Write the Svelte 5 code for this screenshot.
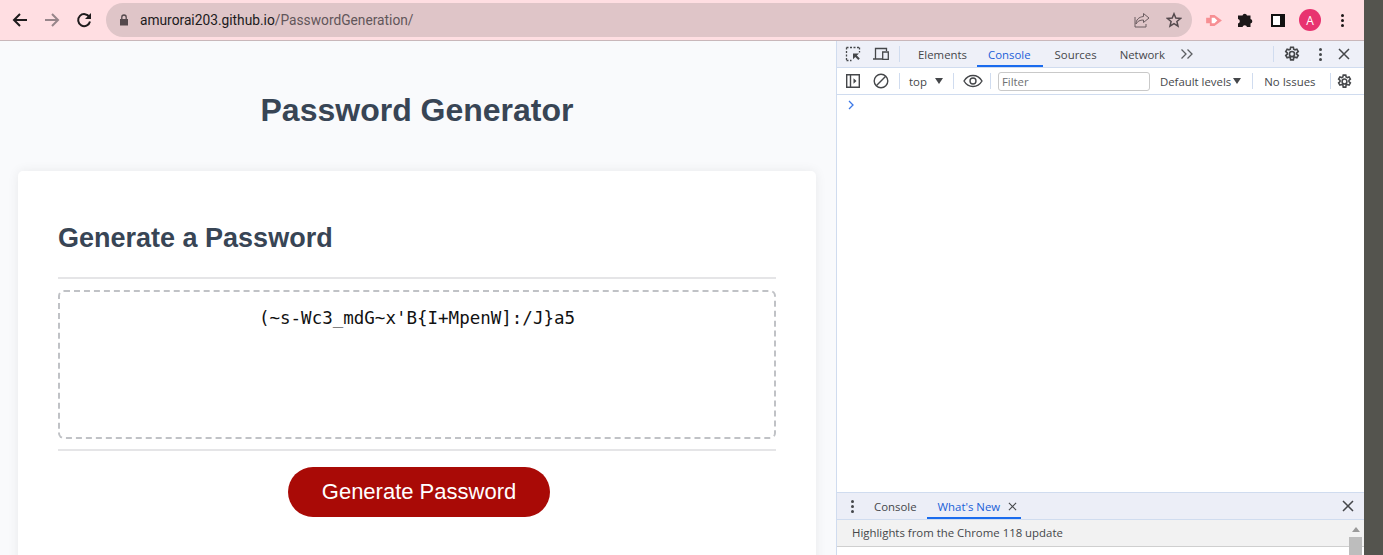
<script lang="ts">
  const password = "(~s-Wc3_mdG~x'B{I+MpenW]:/J}a5";
  const gear = "M12 8.6a3.4 3.4 0 1 0 0 6.8 3.4 3.4 0 0 0 0-6.8zM10.2 3h3.6l.5 2.6 1.7.9 2.5-.9 1.8 3.1-2 1.7v1.9l2 1.7-1.8 3.1-2.5-.9-1.7.9-.5 2.8h-3.6l-.5-2.8-1.7-.9-2.5.9-1.8-3.1 2-1.7v-1.9l-2-1.7 1.8-3.1 2.5.9 1.7-.9z";
</script>

<div class="window">
  <div class="browser">
    <header class="chrome-bar">
      <svg class="nav first" viewBox="0 0 16 16" width="16" height="16"><path d="M15 8H2M8 2L2 8l6 6" fill="none" stroke="#1f1b1d" stroke-width="2" /></svg>
      <svg class="nav" viewBox="0 0 16 16" width="16" height="16"><path d="M1 8h13M8 2l6 6-6 6" fill="none" stroke="#97858a" stroke-width="2" /></svg>
      <svg class="nav" viewBox="0 0 16 16" width="16" height="16"><path d="M13.4 5.2A6 6 0 1 0 14 9.5" fill="none" stroke="#1f1b1d" stroke-width="2" /><path d="M15 1v6H9z" fill="#1f1b1d" /></svg>
      <div class="omnibox">
        <svg viewBox="0 0 10 12" width="10" height="12"><path d="M1 5h8v6.500H1z" fill="#54494d" /><path d="M2.800 5V3.200a2.200 2.200 0 0 1 4.400 0V5" fill="none" stroke="#54494d" stroke-width="1.300" /></svg>
        <span class="url">amurorai203.github.io<span class="path">/PasswordGeneration/</span></span>
        <svg class="share" viewBox="0 0 16 16" width="16" height="16"><path d="M9.500 1.500 15 6l-5.500 4.500V8C6 8 3.500 9 2 12c0-4 2.500-7 7.500-7.500z" fill="none" stroke="#6a5c60" stroke-width="1" /><path d="M1 5v10h11v-3" fill="none" stroke="#6a5c60" stroke-width="1" /></svg>
        <svg class="star" viewBox="0 0 16 16" width="16" height="16"><path d="M8 1.800l1.800 4.300 4.700.4-3.600 3 1.100 4.600L8 11.700l-4 2.400 1.100-4.600-3.600-3 4.700-.4z" fill="none" stroke="#54494d" stroke-width="1.500" /></svg>
      </div>
      <svg class="ext" viewBox="0 0 18 14" width="17" height="13"><path d="M0 4h4V1h5l8 6-8 6H4v-3H0z" fill="#f78f93" /><path d="M6 4h3l3 3-3 3H6z" fill="#fff" /></svg>
      <svg class="puzzle" viewBox="0 0 16 16" width="16" height="16"><path d="M0 3.500h4.500a2.300 2.300 0 0 1 4.500 0h3.500V7a2.300 2.300 0 0 1 0 4.500V15H9a2.300 2.300 0 0 0-4.500 0H0v-3.500a2.300 2.300 0 0 0 0-4.500z" fill="#1c1718" /></svg>
      <div class="sidepanel"></div>
      <div class="avatar">A</div>
      <div class="kebab dark"><i></i><i></i><i></i></div>
    </header>

    <div class="split">
      <main class="page">
        <h1>Password Generator</h1>
        <section class="card">
          <h2>Generate a Password</h2>
          <div class="card-body">
            <div class="output">{password}</div>
          </div>
          <div class="card-footer">
            <button>Generate Password</button>
          </div>
        </section>
      </main>

      <aside class="devtools">
        <div class="dt-tabs">
          <svg class="dt-icon inspect" viewBox="0 0 16 16" width="16" height="16"><path d="M1.500 1.500h13M1.500 1.500v13M1.500 14.500h5M14.500 1.500v5" fill="none" stroke="#45474a" stroke-width="1.300" stroke-dasharray="2 1.500" /><path d="M8 7.500h6l-2.200 2 3 3-1.500 1.500-3-3-2.300 2.200z" fill="#45474a" /></svg>
          <svg class="dt-icon device" viewBox="0 0 18 16" width="18" height="16"><path d="M1 13h9M3.500 13V2.500h11V5" fill="none" stroke="#45474a" stroke-width="1.300" /><path d="M10.700 6h5.600v7.400h-5.600z" fill="none" stroke="#45474a" stroke-width="1.300" /></svg>
          <span class="sep tab-sep"></span>
          <span class="tab elements">Elements</span>
          <span class="tab active console-tab">Console</span>
          <span class="tab sources">Sources</span>
          <span class="tab">Network</span>
          <svg class="more" viewBox="0 0 14 12" width="14" height="12"><path d="M1.500 1.500 6 6l-4.500 4.500M7.500 1.500 12 6l-4.500 4.500" fill="none" stroke="#5c5f63" stroke-width="1.300" /></svg>
          <span class="spacer"></span>
          <span class="sep"></span>
          <svg class="gear-top" viewBox="0 0 24 24" width="18" height="18"><path d={gear} fill="none" stroke="#45474a" stroke-width="2.200" /></svg>
          <div class="kebab"><i></i><i></i><i></i></div>
          <svg class="close" viewBox="0 0 12 12" width="12" height="12"><path d="M1 1l10 10M11 1 1 11" stroke="#45474a" stroke-width="1.500" /></svg>
        </div>

        <div class="dt-toolbar">
          <svg class="panel-icon" viewBox="0 0 14 14" width="14" height="14"><path d="M.7.7h12.600v12.600H.7zM4.500 1v12" fill="none" stroke="#45474a" stroke-width="1.400" /><path d="M7.500 4.200l3 2.800-3 2.800z" fill="#45474a" /></svg>
          <svg class="clear" viewBox="0 0 16 16" width="16" height="16"><circle cx="8" cy="8" r="6.800" fill="none" stroke="#45474a" stroke-width="1.400" /><path d="M3.300 12.700l9.400-9.400" stroke="#45474a" stroke-width="1.400" /></svg>
          <span class="sep"></span>
          <span class="context">top</span>
          <span class="caret ctx"></span>
          <span class="sep"></span>
          <svg class="eye" viewBox="0 0 20 14" width="20" height="14"><path d="M1 7c2.200-3.700 5.200-5.500 9-5.500s6.800 1.800 9 5.500c-2.200 3.700-5.200 5.500-9 5.500S3.200 10.700 1 7z" fill="none" stroke="#45474a" stroke-width="1.400" /><circle cx="10" cy="7" r="3" fill="none" stroke="#45474a" stroke-width="1.400" /></svg>
          <span class="sep"></span>
          <div class="filter">Filter</div>
          <span class="levels">Default levels</span>
          <span class="caret"></span>
          <span class="sep levels-sep"></span>
          <span class="issues">No Issues</span>
          <span class="sep"></span>
          <svg class="gear-bottom" viewBox="0 0 24 24" width="17" height="17"><path d={gear} fill="none" stroke="#45474a" stroke-width="2.200" /></svg>
        </div>

        <div class="console">
          <svg viewBox="0 0 6 10" width="6" height="10"><path d="M1 1l4 4-4 4" fill="none" stroke="#3b78e7" stroke-width="1.300" /></svg>
        </div>

        <div class="drawer-tabs">
          <div class="kebab"><i></i><i></i><i></i></div>
          <span class="tab drawer-console">Console</span>
          <span class="tab active whats-new">What's New
            <svg viewBox="0 0 10 10" width="9" height="9"><path d="M1 1l8 8M9 1 1 9" stroke="#45474a" stroke-width="1.200" /></svg>
          </span>
          <span class="spacer"></span>
          <svg class="close" viewBox="0 0 12 12" width="12" height="12"><path d="M1 1l10 10M11 1 1 11" stroke="#45474a" stroke-width="1.500" /></svg>
        </div>
        <div class="drawer-body">
          <div class="highlights">Highlights from the Chrome 118 update</div>
          <div class="scroll"><span class="arrow"></span><span class="thumb"></span></div>
        </div>
      </aside>
    </div>
  </div>
  <div class="desktop"></div>
</div>

<style>
  :global(body) {
    margin: 0;
    overflow: hidden;
  }
  .window {
    display: flex;
    width: 1383px;
    height: 555px;
    overflow: hidden;
    font-family: "Open Sans", "Noto Sans", sans-serif;
  }
  .browser {
    width: 1364px;
    flex: none;
    display: flex;
    flex-direction: column;
  }
  .desktop {
    flex: 1;
    background: #54544e;
  }
  .chrome-bar {
    height: 40px;
    flex: none;
    display: flex;
    align-items: center;
    background: #ffdee2;
    border-bottom: 1px solid #c9b7ba;
  }
  .nav {
    margin-left: 16px;
  }
  .nav.first {
    margin-left: 12px;
  }
  .omnibox {
    width: 1086px;
    height: 34px;
    margin-left: 14px;
    padding: 0 10px 0 13px;
    box-sizing: border-box;
    border-radius: 17px;
    background: #dfc5c8;
    display: flex;
    align-items: center;
  }
  .url {
    margin-left: 11px;
    font-size: 13.75px;
    color: #201a1c;
    flex: 1;
    font-family: "Roboto", sans-serif;
  }
  .path {
    color: #62565a;
  }
  .share {
    margin-right: 16px;
  }
  .ext {
    margin-left: 14px;
  }
  .puzzle {
    margin-left: 15px;
  }
  .sidepanel {
    width: 7px;
    height: 9px;
    margin-left: 17px;
    border: 2px solid #111;
    border-right-width: 5px;
    background: #fff;
  }
  .avatar {
    width: 22px;
    height: 22px;
    margin-left: 14px;
    border-radius: 50%;
    background: #e8336f;
    color: #fff;
    font-size: 12px;
    display: flex;
    align-items: center;
    justify-content: center;
  }
  .kebab {
    display: flex;
    flex-direction: column;
    gap: 2px;
  }
  .kebab i {
    width: 3px;
    height: 3px;
    border-radius: 50%;
    background: #45474a;
  }
  .kebab.dark {
    margin-left: 20px;
  }
  .kebab.dark i {
    background: #1c1718;
  }
  .split {
    flex: 1;
    display: flex;
    min-height: 0;
  }
  .page {
    width: 836px;
    flex: none;
    background: #f9fafc;
    overflow: hidden;
    font-family: "Liberation Sans", Arial, sans-serif;
  }
  h1 {
    margin: 51px 0 43px;
    padding-right: 2px;
    text-align: center;
    font-size: 32px;
    line-height: 36px;
    color: #384555;
  }
  .card {
    margin: 0 20px 0 18px;
    padding: 0 40px;
    height: 400px;
    background: #fff;
    border-radius: 5px;
    box-shadow: 0 0 12px rgba(0, 0, 0, 0.07);
  }
  h2 {
    margin: 0;
    padding: 50px 0 22px;
    font-size: 27px;
    line-height: 34px;
    color: #384555;
  }
  .card-body {
    padding: 11px 0 10px;
    border-top: 2px solid #e5e5e7;
    border-bottom: 2px solid #e5e5e7;
  }
  .output {
    height: 149px;
    box-sizing: border-box;
    border: 2px dashed #c0c2c6;
    border-radius: 6px;
    padding: 14px 0;
    text-align: center;
    font-family: "DejaVu Sans Mono", monospace;
    font-size: 17.5px;
    line-height: 24px;
    color: #111;
  }
  .card-footer {
    padding: 16px 0 0 4px;
    display: flex;
    justify-content: center;
  }
  button {
    width: 262px;
    height: 50px;
    border: 0;
    border-radius: 25px;
    background: #a90a06;
    color: #fff;
    font-family: inherit;
    font-size: 22px;
  }
  .devtools {
    flex: 1;
    display: flex;
    flex-direction: column;
    min-width: 0;
    background: #fff;
    border-left: 1px solid #d0dcef;
    color: #45474a;
    font-size: 11.4px;
  }
  .dt-tabs {
    height: 26px;
    flex: none;
    display: flex;
    align-items: center;
    background: #eef0f8;
    border-bottom: 1px solid #d0dcef;
  }
  .dt-icon.inspect {
    margin-left: 8px;
  }
  .dt-icon.device {
    margin-left: 11px;
  }
  .sep {
    width: 1px;
    height: 16px;
    flex: none;
    background: #d0dcef;
  }
  .tab-sep {
    margin-left: 9px;
  }
  .tab {
    height: 100%;
    padding: 0 11px;
    display: flex;
    align-items: center;
    box-sizing: border-box;
  }
  .tab-sep + .tab {
    margin-left: 7px;
  }
  .tab.elements {
    padding-right: 10px;
  }
  .tab.console-tab {
    padding-right: 12px;
  }
  .tab.sources {
    padding: 0 12px;
  }
  .tab.active {
    color: #1a5fd8;
    border-bottom: 2px solid #1a6bee;
    padding-top: 2px;
  }
  .more {
    margin-left: 4px;
  }
  .spacer {
    flex: 1;
  }
  .gear-top {
    margin-left: 9px;
  }
  .dt-tabs .kebab {
    margin-left: 18px;
  }
  .dt-tabs .close {
    margin-left: 16px;
    margin-right: 14px;
  }
  .dt-toolbar {
    height: 26px;
    flex: none;
    display: flex;
    align-items: center;
    background: #fff;
    border-bottom: 1px solid #d0dcef;
  }
  .panel-icon {
    margin-left: 9px;
  }
  .clear {
    margin-left: 13px;
  }
  .clear + .sep {
    margin-left: 10px;
  }
  .context {
    margin-left: 9px;
  }
  .caret {
    width: 0;
    height: 0;
    border-left: 4px solid transparent;
    border-right: 4px solid transparent;
    border-top: 6px solid #45474a;
    margin-left: 2px;
  }
  .caret.ctx {
    margin-left: 8px;
    margin-right: 10px;
  }
  .eye {
    margin-left: 9px;
    margin-right: 7px;
  }
  .filter {
    width: 152px;
    height: 19px;
    margin-left: 7px;
    padding-left: 3px;
    box-sizing: border-box;
    border: 1px solid #c9c9c9;
    border-radius: 3px;
    color: #6e7073;
    line-height: 18px;
  }
  .levels {
    margin-left: 10px;
  }
  .levels-sep {
    margin-left: 11px;
  }
  .issues {
    margin-left: 11px;
    margin-right: 14px;
  }
  .gear-bottom {
    margin-left: 5px;
  }
  .console {
    flex: 1;
    padding: 5px 0 0 11px;
  }
  .console svg {
    display: block;
  }
  .drawer-tabs {
    height: 26px;
    flex: none;
    display: flex;
    align-items: center;
    background: #eceef7;
    border-top: 1px solid #d0dcef;
    border-bottom: 1px solid #d0dcef;
  }
  .drawer-tabs .kebab {
    margin-left: 14px;
    margin-right: 9px;
  }
  .tab.drawer-console {
    padding-right: 10px;
  }
  .whats-new {
    gap: 8px;
    padding-right: 4px;
  }
  .drawer-tabs .close {
    margin-right: 10px;
  }
  .drawer-body {
    height: 35px;
    flex: none;
    position: relative;
  }
  .highlights {
    height: 26px;
    line-height: 26px;
    padding-left: 15px;
    background: #f2f2f2;
    border-bottom: 1px solid #cfcfcf;
  }
  .scroll {
    position: absolute;
    top: 0;
    right: 2px;
    width: 13px;
    display: flex;
    flex-direction: column;
    align-items: center;
  }
  .arrow {
    margin-top: 7px;
    width: 0;
    height: 0;
    border-left: 4px solid transparent;
    border-right: 4px solid transparent;
    border-bottom: 5px solid #9a9a9a;
  }
  .thumb {
    margin-top: 5px;
    width: 13px;
    height: 18px;
    background: #bdbdbd;
  }
</style>
